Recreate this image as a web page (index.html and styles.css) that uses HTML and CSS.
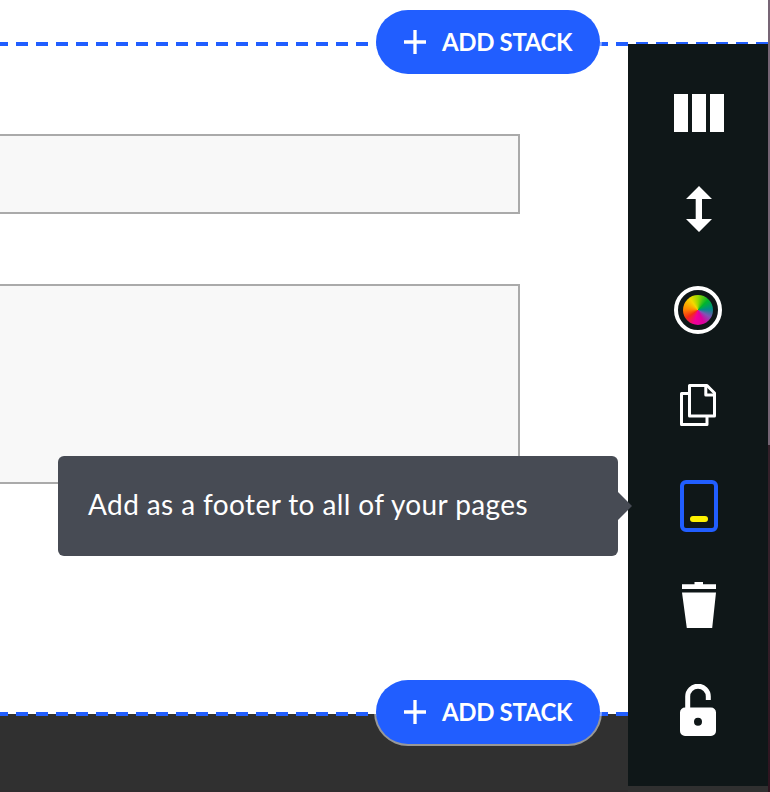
FILE: index.html
```
<!DOCTYPE html>
<html lang="en">
<head>
<meta charset="utf-8">
<title>Stack editor</title>
<link rel="stylesheet" href="styles.css">
</head>
<body>
<div class="editor">
  <main class="canvas">
    <div class="divider">
      <button class="add-stack"><svg width="22" height="24" viewBox="0 0 22 24"><path d="M0 12H22M11 0V24" stroke="currentColor" stroke-width="3.3"/></svg><span class="add-label">ADD STACK</span></button>
    </div>
    <form class="fields">
      <div class="field"></div>
      <div class="field field-large"></div>
    </form>
    <div class="divider divider-bottom">
      <button class="add-stack"><svg width="22" height="24" viewBox="0 0 22 24"><path d="M0 12H22M11 0V24" stroke="currentColor" stroke-width="3.3"/></svg><span class="add-label">ADD STACK</span></button>
    </div>
  </main>
  <aside class="side">
    <div class="side-top"></div>
    <nav class="rail">
      <svg class="icon columns" width="50" height="38" viewBox="0 0 50 38"><path d="M0 0h14v38H0zM18 0h14v38H18zM36 0h14v38H36z" fill="#fff"/></svg>
      <svg class="icon resize" width="26" height="46" viewBox="0 0 26 46"><path d="M13 0L26 13H16V33H26L13 46L0 33H9.700V13H0Z" fill="#fff"/></svg>
      <span class="icon color"><span class="wheel"></span></span>
      <svg class="icon copy" width="36" height="42" viewBox="0 0 36 42"><g fill="none" stroke="#fff" stroke-width="3" stroke-linejoin="round"><path d="M8 9.500H1.500V40.500H27V33"/><path d="M9.500 1.500H27L34.500 9V32H9.500Z"/><path d="M25.800 2V11H34"/></g></svg>
      <span class="icon footer"><span class="footer-mark"></span>
        <span class="tooltip"><span class="tip-text">Add as a footer to all of your pages</span></span>
      </span>
      <svg class="icon trash" width="34" height="46" viewBox="0 0 34 46"><path d="M0 2.200H12.500V0H21V2.200H34V7H0ZM0 10.400H34L30.200 46H4.800Z" fill="#fff"/></svg>
      <svg class="icon lock" width="36" height="52" viewBox="0 0 36 52"><path d="M7.700 26V12.500a10.300 10.300 0 0 1 20.600 0V16" fill="none" stroke="#fff" stroke-width="5"/><path fill-rule="evenodd" d="M5 23.500H31a5 5 0 0 1 5 5V47a5 5 0 0 1-5 5H5a5 5 0 0 1-5-5V28.500a5 5 0 0 1 5-5ZM18 33.700a4 4 0 1 0 0 8a4 4 0 1 0 0-8Z" fill="#fff"/></svg>
    </nav>
  </aside>
  <div class="edge"></div>
</div>
</body>
</html>
```
FILE: styles.css
```
* { box-sizing: border-box; }
body { margin: 0; background: #fff; font-family: Lato, sans-serif; }
.editor { display: flex; width: 770px; height: 792px; overflow: hidden; }
.canvas { display: flex; flex-direction: column; width: 628px; }
.divider {
  height: 84px;
  padding: 10px 28px 0 0;
  display: flex;
  justify-content: flex-end;
  align-items: flex-start;
  background: repeating-linear-gradient(90deg, #215eff 0 8.400px, transparent 8.400px 16.400px, #215eff 16.400px 20px) 0 42px / 100% 4px no-repeat;
}
.divider-bottom {
  height: 122px;
  background:
    repeating-linear-gradient(90deg, #215eff 0 8.400px, transparent 8.400px 16.400px, #215eff 16.400px 20px) 0 42px / 100% 4px no-repeat,
    linear-gradient(#fff 0 44px, #303030 44px 120px, #302c2e 120px);
}
.add-stack {
  display: flex;
  align-items: center;
  width: 224px;
  height: 64px;
  padding: 0 0 0 28px;
  border: 0;
  border-radius: 32px;
  background: #215eff;
  box-shadow: 0 0 0 2px rgba(255, 255, 255, .5);
  color: #fff;
  font: 700 24px/64px Lato, sans-serif;
}
.add-label { margin-left: 16px; white-space: nowrap; letter-spacing: -.35px; }
.fields { flex: 1; padding-top: 50px; }
.field { width: 520px; height: 80px; background: #f8f8f8; border: 2px solid #aaa; border-left: 0; }
.field-large { height: 200px; margin-top: 70px; }
.side { width: 140px; background: #303030; }
.side-top {
  height: 44px;
  background: #fff repeating-linear-gradient(90deg, #fff 0 8px, #215eff 8px 20px) 0 42px / 100% 2px no-repeat;
}
.rail {
  display: flex;
  flex-direction: column;
  align-items: center;
  height: 742px;
  padding-top: 50px;
  background: #0f1718;
}
.icon { display: block; flex: none; }
.columns { margin-left: 2px; }
.resize { margin-top: 54px; margin-left: 2px; }
.color {
  display: grid;
  place-items: center;
  width: 48px;
  height: 48px;
  margin-top: 54px;
  border: 4px solid #fff;
  border-radius: 50%;
}
.wheel {
  width: 30px;
  height: 30px;
  border-radius: 50%;
  background: conic-gradient(from 0deg, #99d900, #00b52c 45deg, #008d87 85deg, #8053b5 120deg, #dc009e 155deg, #f0009a 195deg, #f42b16 235deg, #ff8a00 275deg, #f5d900 325deg, #99d900);
}
.copy { margin-top: 50px; }
.footer {
  position: relative;
  width: 38px;
  height: 52px;
  margin-top: 54px;
  margin-left: 2px;
  padding: 32px 0 0 6px;
  border: 4px solid #215eff;
  border-radius: 6px;
}
.footer-mark { display: block; width: 18px; height: 6px; border-radius: 3px; background: #fff200; }
.tooltip {
  position: absolute;
  right: 96px;
  top: -28px;
  width: 560px;
  height: 100px;
  padding-left: 30px;
  border-radius: 6px;
  background: #474b54;
  color: #fff;
  font-size: 28px;
  line-height: 97px;
  letter-spacing: .4px;
  white-space: nowrap;
}
.tooltip::after {
  content: "";
  position: absolute;
  left: 100%;
  top: 36px;
  border: 14px solid transparent;
  border-left-color: #474b54;
  border-right: 0;
}
.trash { margin-top: 50px; margin-left: 2px; }
.lock { margin-top: 56px; }
.edge { width: 2px; background: linear-gradient(#776575 0 445px, #35202a 445px 600px, #30131f 792px); }
```
